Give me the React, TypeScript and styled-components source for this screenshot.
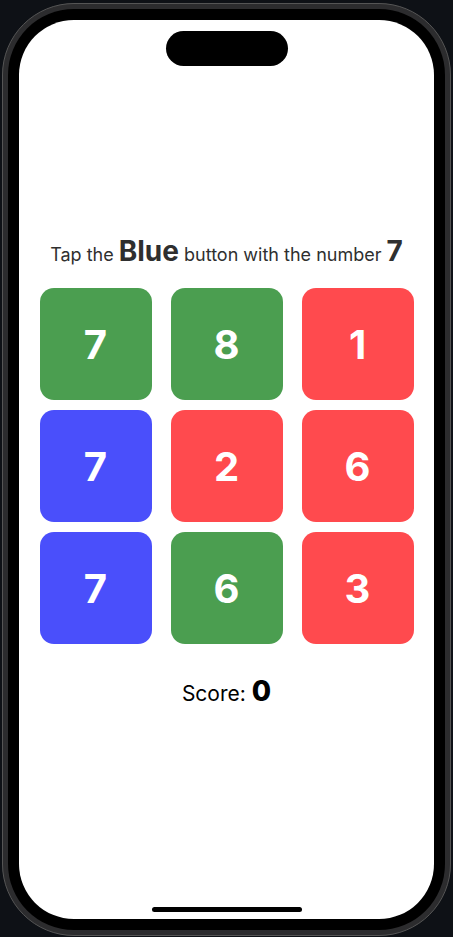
import styled, { createGlobalStyle } from 'styled-components';

type Tint = 'green' | 'red' | 'blue';

interface Tile {
  id: number;
  value: number;
  tint: Tint;
}

const tints: Record<Tint, string> = {
  green: '#4b9e50',
  red: '#ff4a4e',
  blue: '#4a4ffb',
};

const tiles: Tile[] = [
  { id: 1, value: 7, tint: 'green' },
  { id: 2, value: 8, tint: 'green' },
  { id: 3, value: 1, tint: 'red' },
  { id: 4, value: 7, tint: 'blue' },
  { id: 5, value: 2, tint: 'red' },
  { id: 6, value: 6, tint: 'red' },
  { id: 7, value: 7, tint: 'blue' },
  { id: 8, value: 6, tint: 'green' },
  { id: 9, value: 3, tint: 'red' },
];

const GlobalStyle = createGlobalStyle`
  html, body {
    margin: 0;
    padding: 0;
    background: #0e1116;
    font-family: Inter, "Liberation Sans", sans-serif;
  }
`;

const Stage = styled.div`
  width: 453px;
  height: 937px;
  padding: 3px 0 0 2px;
  box-sizing: border-box;
`;

const Frame = styled.div`
  width: 449px;
  height: 933px;
  box-sizing: border-box;
  border: 1px solid #555;
  border-radius: 72px;
  background: #2c2c2e;
  padding: 5px;
`;

const Bezel = styled.div`
  height: 100%;
  box-sizing: border-box;
  border-radius: 66px;
  background: #000;
  padding: 11px;
`;

const Screen = styled.div`
  position: relative;
  height: 100%;
  border-radius: 55px;
  background: #fff;
  display: flex;
  flex-direction: column;
  align-items: center;
  overflow: hidden;
`;

const Island = styled.div`
  position: absolute;
  top: 11px;
  left: 147px;
  width: 122px;
  height: 35px;
  border-radius: 18px;
  background: #000;
`;

const HomeBar = styled.div`
  position: absolute;
  bottom: 7px;
  left: 133px;
  width: 150px;
  height: 5px;
  border-radius: 3px;
  background: #000;
`;

const Prompt = styled.p`
  margin: 211px 0 0;
  color: #2f2f2f;
  font-size: 18px;
  line-height: 40px;
  white-space: nowrap;
`;

const Emph = styled.strong`
  font-size: 28px;
  font-weight: 700;
`;

const Grid = styled.div`
  margin-top: 13px;
  display: grid;
  grid-template-columns: repeat(3, 112px);
  column-gap: 19px;
  row-gap: 10px;
`;

const NumberButton = styled.button<{ $tint: Tint }>`
  width: 112px;
  height: 112px;
  border: none;
  border-radius: 14px;
  background: ${(p) => tints[p.$tint]};
  color: #fff;
  font-family: Inter, "Liberation Sans", sans-serif;
  font-size: 40px;
  font-weight: 700;
  padding: 0;
  cursor: pointer;
`;

const Score = styled.p`
  margin: 27px 0 0;
  color: #000;
  font-size: 21px;
  line-height: 40px;
`;

const ScoreValue = styled.strong`
  font-size: 28px;
  font-weight: 800;
`;

const App = () => {
  return (
    <>
      <GlobalStyle />
      <Stage>
        <Frame>
          <Bezel>
            <Screen>
              <Island />
              <Prompt>
                Tap the <Emph>Blue</Emph> button with the number <Emph>7</Emph>
              </Prompt>
              <Grid>
                {tiles.map((t) => (
                  <NumberButton key={t.id} $tint={t.tint}>
                    {t.value}
                  </NumberButton>
                ))}
              </Grid>
              <Score>
                Score: <ScoreValue>0</ScoreValue>
              </Score>
              <HomeBar />
            </Screen>
          </Bezel>
        </Frame>
      </Stage>
    </>
  );
};

export default App;
